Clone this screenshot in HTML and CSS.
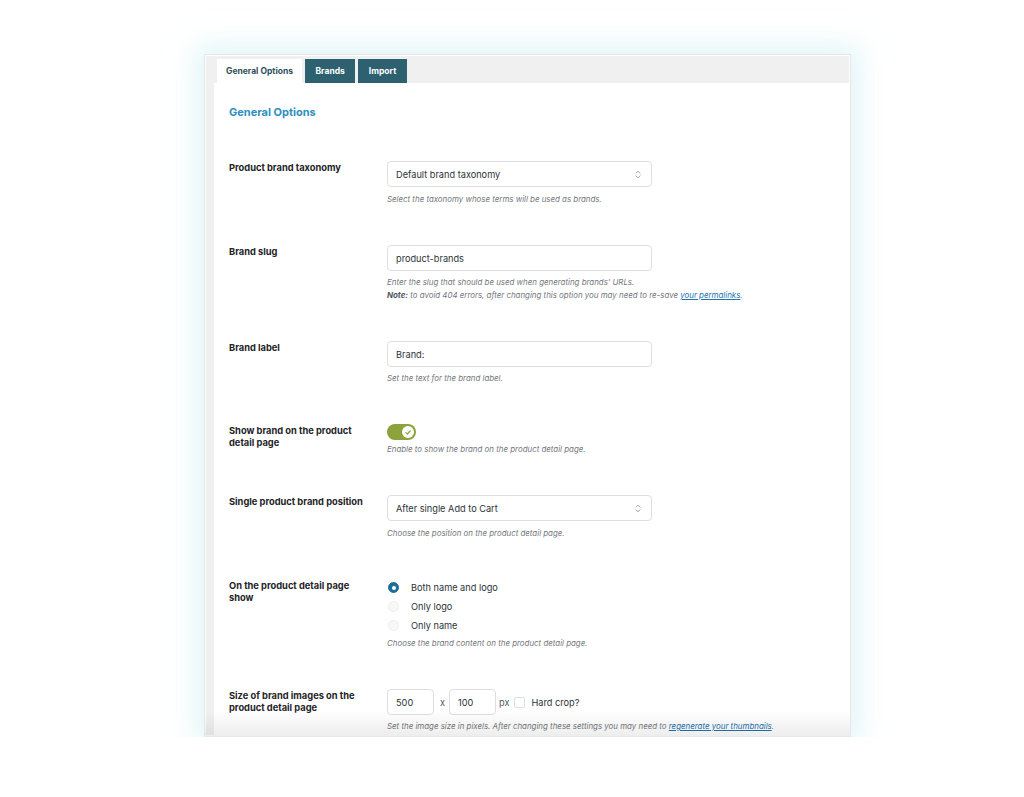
FILE: index.html
```html
<!DOCTYPE html>
<html lang="en">
<head>
<meta charset="utf-8">
<title>Brands – General Options</title>
<link rel="stylesheet" href="styles.css">
</head>
<body>
<div class="stage">
  <div class="panel">
    <div class="frame">
      <nav class="tabs">
        <a class="tab active">General Options</a>
        <a class="tab">Brands</a>
        <a class="tab">Import</a>
      </nav>
      <div class="content">
        <h2 class="section-title">General Options</h2>
        <div class="form">
          <div class="row">
            <div class="label">Product brand taxonomy</div>
            <div class="field">
              <div class="control select">
                <span>Default brand taxonomy</span>
                <svg class="chev" width="6" height="9" viewBox="0 0 6 9"><path d="M1 3.2 3 1.2 5 3.2M1 5.8 3 7.8 5 5.8" fill="none" stroke="#9a9da2" stroke-width="1" stroke-linecap="round" stroke-linejoin="round"/></svg>
              </div>
              <p class="desc">Select the taxonomy whose terms will be used as brands.</p>
            </div>
          </div>

          <div class="row">
            <div class="label">Brand slug</div>
            <div class="field">
              <div class="control"><span>product-brands</span></div>
              <p class="desc">Enter the slug that should be used when generating brands' URLs.<br><b>Note:</b> to avoid 404 errors, after changing this option you may need to re-save <a class="link">your permalinks</a>.</p>
            </div>
          </div>

          <div class="row">
            <div class="label">Brand label</div>
            <div class="field">
              <div class="control"><span>Brand:</span></div>
              <p class="desc">Set the text for the brand label.</p>
            </div>
          </div>

          <div class="row">
            <div class="label">Show brand on the product detail page</div>
            <div class="field">
              <div class="toggle">
                <span class="knob">
                  <svg width="6" height="5" viewBox="0 0 6 5"><path d="M0.8 2.6 2.3 4 5.2 1" fill="none" stroke="#8ca23a" stroke-width="1.2" stroke-linecap="round" stroke-linejoin="round"/></svg>
                </span>
              </div>
              <p class="desc desc-toggle">Enable to show the brand on the product detail page.</p>
            </div>
          </div>

          <div class="row">
            <div class="label">Single product brand position</div>
            <div class="field">
              <div class="control select">
                <span>After single Add to Cart</span>
                <svg class="chev" width="6" height="9" viewBox="0 0 6 9"><path d="M1 3.2 3 1.2 5 3.2M1 5.8 3 7.8 5 5.8" fill="none" stroke="#9a9da2" stroke-width="1" stroke-linecap="round" stroke-linejoin="round"/></svg>
              </div>
              <p class="desc">Choose the position on the product detail page.</p>
            </div>
          </div>

          <div class="row">
            <div class="label">On the product detail page show</div>
            <div class="field">
              <ul class="radios">
                <li><span class="radio checked"></span>Both name and logo</li>
                <li><span class="radio"></span>Only logo</li>
                <li><span class="radio"></span>Only name</li>
              </ul>
              <p class="desc desc-radio">Choose the brand content on the product detail page.</p>
            </div>
          </div>

          <div class="row">
            <div class="label">Size of brand images on the product detail page</div>
            <div class="field">
              <div class="size">
                <div class="control small"><span>500</span></div>
                <span class="x">x</span>
                <div class="control small"><span>100</span></div>
                <span class="px">px</span>
                <span class="checkbox"></span>
                <span class="crop">Hard crop?</span>
              </div>
              <p class="desc">Set the image size in pixels. After changing these settings you may need to <a class="link">regenerate your thumbnails</a>.</p>
            </div>
          </div>
        </div>
      </div>
    </div>
  </div>
</div>
</body>
</html>
```

FILE: styles.css
```css
* { box-sizing: border-box; }

body {
  margin: 0;
  background: #ffffff;
  font-family: Inter, "Noto Sans", "Liberation Sans", sans-serif;
  color: #1d2327;
}

.stage {
  padding: 54px 0 0 204px;
}

.panel {
  position: relative;
  width: 647px;
  height: 683px;
  background: #ffffff;
  border: 1px solid #e4e8ea;
  padding: 1px;
  overflow: hidden;
  box-shadow: 0 0 26px 8px rgba(175, 228, 236, 0.38);
}

.panel::after {
  content: "";
  position: absolute;
  left: 0;
  right: 0;
  bottom: 0;
  height: 26px;
  background: linear-gradient(to bottom, rgba(0, 0, 0, 0), rgba(0, 0, 0, 0.07));
  pointer-events: none;
}

.frame {
  height: 100%;
  background: #f0f0f1;
  padding-left: 8px;
  display: flex;
  flex-direction: column;
}

.tabs {
  display: flex;
  gap: 3px;
  height: 27px;
  padding: 3px 0 0 3px;
}

.tab {
  display: block;
  height: 24px;
  line-height: 24px;
  padding: 0 10.5px;
  font-size: 8.5px;
  font-weight: 700;
  color: #ffffff;
  background: #2d6170;
}

.tab.active {
  padding: 0 9px;
  background: #ffffff;
  color: #2f4f5a;
}

.content {
  flex: 1;
  background: #ffffff;
  padding: 22px 0 0 15px;
}

.section-title {
  margin: 0;
  font-size: 11px;
  line-height: 14px;
  font-weight: 700;
  color: #2f8fbf;
}

.form {
  margin-top: 42px;
  display: flex;
  flex-direction: column;
  gap: 39px;
}

.row {
  display: flex;
}

.label {
  width: 158px;
  flex: none;
  padding: 1px 20px 0 0;
  font-size: 9.3px;
  line-height: 12px;
  font-weight: 700;
  color: #1d2327;
}

.field {
  width: 265px;
}

.control {
  height: 26px;
  border: 1px solid #dcdfe2;
  border-radius: 4px;
  background: #ffffff;
  display: flex;
  align-items: center;
  justify-content: space-between;
  padding: 0 10px 0 8px;
  font-size: 9.2px;
  color: #2c3338;
}

.chev {
  display: block;
}

.desc {
  margin: 5px 0 0;
  font-size: 7.9px;
  line-height: 13px;
  font-style: italic;
  color: #74787d;
  white-space: nowrap;
}

.select + .desc {
  margin-top: 6px;
}

.desc b {
  color: #50575e;
}

.desc-toggle {
  margin-top: 3px;
}

.desc-radio {
  margin-top: 2px;
}

.link {
  color: #2271b1;
  text-decoration: underline;
}

.toggle {
  width: 29px;
  height: 16px;
  border-radius: 8px;
  background: #8ca23a;
  display: flex;
  align-items: center;
  justify-content: flex-end;
  padding-right: 2px;
}

.knob {
  width: 12px;
  height: 12px;
  border-radius: 50%;
  background: #ffffff;
  display: flex;
  align-items: center;
  justify-content: center;
}

.knob svg {
  display: block;
}

.radios {
  list-style: none;
  margin: -1px 0 0;
  padding: 0;
}

.radios li {
  display: flex;
  align-items: center;
  height: 19px;
  font-size: 9.2px;
  color: #2c3338;
}

.radio {
  width: 11px;
  height: 11px;
  border-radius: 50%;
  margin: 0 12px 0 1px;
  background: #f6f7f7;
  border: 1px solid #eceeef;
  flex: none;
}

.radio.checked {
  background: #1f6e96;
  border-color: #1f6e96;
  position: relative;
}

.radio.checked::after {
  content: "";
  position: absolute;
  left: 2.5px;
  top: 2.5px;
  width: 4px;
  height: 4px;
  border-radius: 50%;
  background: #ffffff;
}

.size {
  display: flex;
  align-items: center;
  font-size: 9.2px;
  color: #2c3338;
}

.control.small {
  width: 47px;
  justify-content: flex-start;
}

.x {
  margin: 0 4px 0 6px;
  color: #50575e;
}

.px {
  margin: 0 5px 0 3px;
  color: #50575e;
}

.checkbox {
  width: 11px;
  height: 11px;
  border: 1px solid #dcdfe2;
  border-radius: 2px;
  background: #ffffff;
  margin-right: 6px;
}

.crop {
  color: #2c3338;
}
```
